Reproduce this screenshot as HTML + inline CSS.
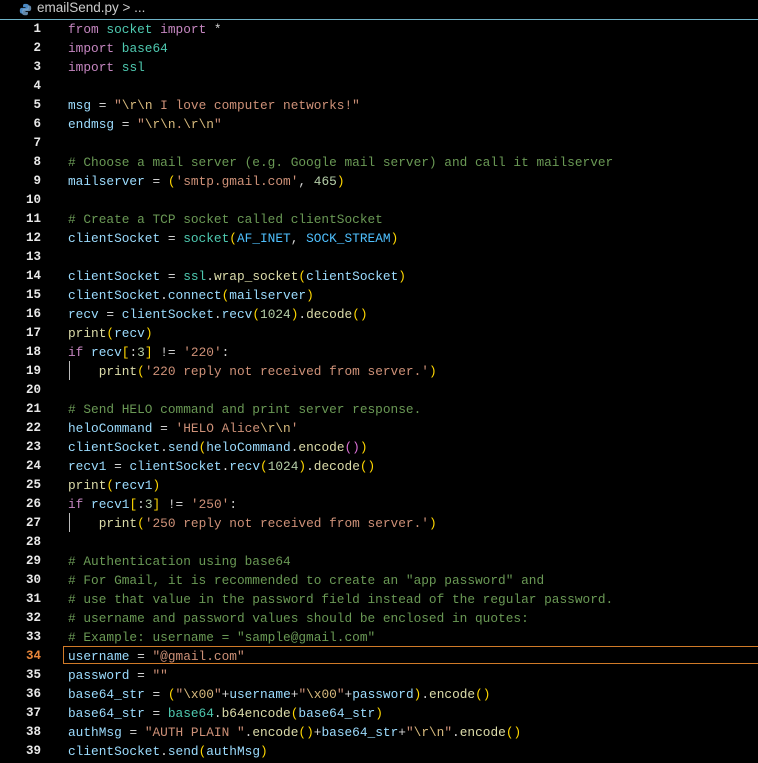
<!DOCTYPE html>
<html><head><meta charset="utf-8"><style>
html,body{margin:0;padding:0;background:#000;width:758px;height:763px;overflow:hidden}
body{font-family:"Liberation Mono",monospace;font-size:12.8px;color:#d4d4d4;position:relative}
.tab{position:absolute;left:0;top:0;width:758px;height:19px;border-bottom:1px solid #6fb3c8;font-family:"Liberation Sans",sans-serif;font-size:13.5px;color:#ccc}
.tab span{position:absolute;left:37px;top:0px}
.ln{position:absolute;left:0;width:41px;text-align:right;color:#e8e8e8;height:19px;line-height:19px;font-weight:bold;font-size:12.5px}
.cd{position:absolute;left:68px;white-space:pre;height:19px;line-height:19px}
.k{color:#c586c0}.v{color:#9cdcfe}.m{color:#4ec9b0}.s{color:#ce9178}.e{color:#d7ba7d}.c{color:#6a9955}.f{color:#dcdcaa}.p{color:#ffd700}.q{color:#da70d6}.n{color:#b5cea8}.o{color:#d4d4d4}.b{color:#4fc1ff}
.hl{position:absolute;left:63px;top:646px;width:700px;height:18px;border:1px solid #d07a28;box-sizing:border-box}
.guide{position:absolute;left:69px;width:1px;background:#bbb}
</style></head><body>
<div class="tab"><svg style="position:absolute;left:19px;top:3px" width="13" height="13" viewBox="0 0 16 16"><path d="M8 1c-3 0-3 1.3-3 2v2h3v1H3.5C2 6 1 7 1 9.5S2 13 3.5 13H5v-2c0-1.2 1-2 2-2h3c1 0 2-1 2-2V3c0-1-1-2-4-2z" fill="#4a88c2"/><path d="M8 15c3 0 3-1.3 3-2v-2H8v-1h4.5c1.5 0 2.5-1 2.5-3.5S14 3 12.5 3H11v2c0 1.2-1 2-2 2H6c-1 0-2 1-2 2v4c0 1 1 2 4 2z" fill="#7aa7cf" opacity=".8"/></svg><span>emailSend.py &gt; ...</span></div>
<div class="hl"></div>
<div class="guide" style="top:361px;height:19px"></div>
<div class="guide" style="top:513px;height:19px"></div>
<div id="c"></div>
<script>
var L=[
'<span class="k">from</span> <span class="m">socket</span> <span class="k">import</span> *',
'<span class="k">import</span> <span class="m">base64</span>',
'<span class="k">import</span> <span class="m">ssl</span>',
'',
'<span class="v">msg</span> = <span class="s">"<span class="e">\\r\\n</span> I love computer networks!"</span>',
'<span class="v">endmsg</span> = <span class="s">"<span class="e">\\r\\n</span>.<span class="e">\\r\\n</span>"</span>',
'',
'<span class="c"># Choose a mail server (e.g. Google mail server) and call it mailserver</span>',
'<span class="v">mailserver</span> = <span class="p">(</span><span class="s">\'smtp.gmail.com\'</span>, <span class="n">465</span><span class="p">)</span>',
'',
'<span class="c"># Create a TCP socket called clientSocket</span>',
'<span class="v">clientSocket</span> = <span class="m">socket</span><span class="p">(</span><span class="b">AF_INET</span>, <span class="b">SOCK_STREAM</span><span class="p">)</span>',
'',
'<span class="v">clientSocket</span> = <span class="m">ssl</span>.<span class="f">wrap_socket</span><span class="p">(</span><span class="v">clientSocket</span><span class="p">)</span>',
'<span class="v">clientSocket</span>.<span class="v">connect</span><span class="p">(</span><span class="v">mailserver</span><span class="p">)</span>',
'<span class="v">recv</span> = <span class="v">clientSocket</span>.<span class="v">recv</span><span class="p">(</span><span class="n">1024</span><span class="p">)</span>.<span class="f">decode</span><span class="p">()</span>',
'<span class="f">print</span><span class="p">(</span><span class="v">recv</span><span class="p">)</span>',
'<span class="k">if</span> <span class="v">recv</span><span class="p">[</span>:<span class="n">3</span><span class="p">]</span> != <span class="s">\'220\'</span>:',
'    <span class="f">print</span><span class="p">(</span><span class="s">\'220 reply not received from server.\'</span><span class="p">)</span>',
'',
'<span class="c"># Send HELO command and print server response.</span>',
'<span class="v">heloCommand</span> = <span class="s">\'HELO Alice<span class="e">\\r\\n</span>\'</span>',
'<span class="v">clientSocket</span>.<span class="v">send</span><span class="p">(</span><span class="v">heloCommand</span>.<span class="f">encode</span><span class="q">()</span><span class="p">)</span>',
'<span class="v">recv1</span> = <span class="v">clientSocket</span>.<span class="v">recv</span><span class="p">(</span><span class="n">1024</span><span class="p">)</span>.<span class="f">decode</span><span class="p">()</span>',
'<span class="f">print</span><span class="p">(</span><span class="v">recv1</span><span class="p">)</span>',
'<span class="k">if</span> <span class="v">recv1</span><span class="p">[</span>:<span class="n">3</span><span class="p">]</span> != <span class="s">\'250\'</span>:',
'    <span class="f">print</span><span class="p">(</span><span class="s">\'250 reply not received from server.\'</span><span class="p">)</span>',
'',
'<span class="c"># Authentication using base64</span>',
'<span class="c"># For Gmail, it is recommended to create an "app password" and</span>',
'<span class="c"># use that value in the password field instead of the regular password.</span>',
'<span class="c"># username and password values should be enclosed in quotes:</span>',
'<span class="c"># Example: username = "sample@gmail.com"</span>',
'<span class="v">username</span> = <span class="s">"@gmail.com"</span>',
'<span class="v">password</span> = <span class="s">""</span>',
'<span class="v">base64_str</span> = <span class="p">(</span><span class="s">"<span class="e">\\x00</span>"</span>+<span class="v">username</span>+<span class="s">"<span class="e">\\x00</span>"</span>+<span class="v">password</span><span class="p">)</span>.<span class="f">encode</span><span class="p">()</span>',
'<span class="v">base64_str</span> = <span class="m">base64</span>.<span class="f">b64encode</span><span class="p">(</span><span class="v">base64_str</span><span class="p">)</span>',
'<span class="v">authMsg</span> = <span class="s">"AUTH PLAIN "</span>.<span class="f">encode</span><span class="p">()</span>+<span class="v">base64_str</span>+<span class="s">"<span class="e">\\r\\n</span>"</span>.<span class="f">encode</span><span class="p">()</span>',
'<span class="v">clientSocket</span>.<span class="v">send</span><span class="p">(</span><span class="v">authMsg</span><span class="p">)</span>'
];
var h='';
for(var i=0;i<L.length;i++){var t=19.5+i*19;
h+='<div class="ln" style="top:'+t+'px'+(i==33?';color:#e8863a':'')+'">'+(i+1)+'</div><div class="cd" style="top:'+t+'px">'+L[i]+'</div>';}
document.getElementById('c').innerHTML=h;
</script>
</body></html>
